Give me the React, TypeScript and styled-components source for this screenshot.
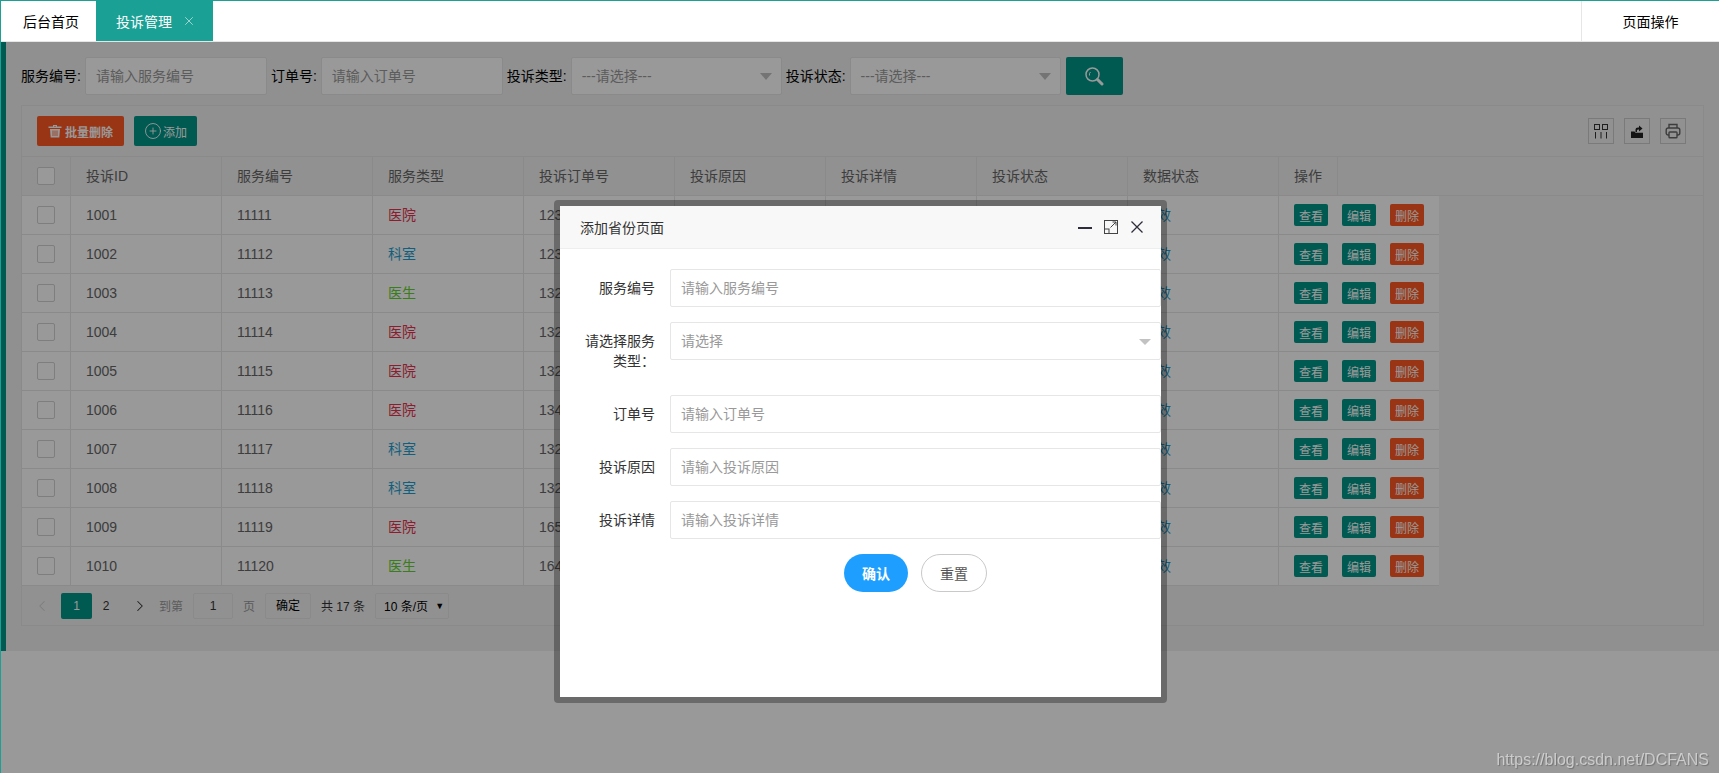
import React from 'react';
import styled, { createGlobalStyle } from 'styled-components';
import { CirclePlus, ChevronLeft, ChevronRight, X } from 'lucide-react';

const GlobalStyle = createGlobalStyle`
  html, body {
    margin: 0;
    padding: 0;
    background: #fff;
  }
  body {
    font-family: "Liberation Sans", "Noto Sans CJK SC", sans-serif;
    font-size: 14px;
    color: #666;
  }
  input::placeholder {
    color: #999;
  }
`;

const rows = [
  ['1001', '11111', 'hospital', '123'],
  ['1002', '11112', 'dept', '123'],
  ['1003', '11113', 'doctor', '132'],
  ['1004', '11114', 'hospital', '132'],
  ['1005', '11115', 'hospital', '132'],
  ['1006', '11116', 'hospital', '134'],
  ['1007', '11117', 'dept', '132'],
  ['1008', '11118', 'dept', '132'],
  ['1009', '11119', 'hospital', '165'],
  ['1010', '11120', 'doctor', '164'],
];

const kinds: Record<string, { label: string; color: string }> = {
  hospital: { label: '医院', color: '#e8324e' },
  dept: { label: '科室', color: '#1e9fd0' },
  doctor: { label: '医生', color: '#5fd030' },
};

const headers = ['投诉ID', '服务编号', '服务类型', '投诉订单号', '投诉原因', '投诉详情', '投诉状态', '数据状态'];

export default function App() {
  return (
    <Page>
      <GlobalStyle />
      <TabBar>
        <Tab>后台首页</Tab>
        <Tab $active>
          投诉管理
          <X size={14} strokeWidth={1.4} color="#b8dfdb" />
        </Tab>
        <PageOps>页面操作</PageOps>
      </TabBar>

      <Frame>
        <Content>
          <SearchRow>
            <SearchLabel>服务编号:</SearchLabel>
            <SearchInput placeholder="请输入服务编号" />
            <SearchLabel>订单号:</SearchLabel>
            <SearchInput placeholder="请输入订单号" />
            <SearchLabel>投诉类型:</SearchLabel>
            <SearchSelect>---请选择---<Caret /></SearchSelect>
            <SearchLabel>投诉状态:</SearchLabel>
            <SearchSelect>---请选择---<Caret /></SearchSelect>
            <SearchButton>
              <svg width="20" height="20" viewBox="0 0 20 20" fill="none" stroke="#fff">
                <circle cx="8.5" cy="8.5" r="6.5" strokeWidth="1.5" />
                <path d="M5.5 9.5a3.5 3.5 0 0 1 1-3.5" strokeWidth="1" />
                <path d="M13.5 13.5l4.5 4.5" strokeWidth="3" strokeLinecap="round" />
              </svg>
            </SearchButton>
          </SearchRow>

          <Panel>
            <Toolbar>
              <ToolbarBtn $danger $w={87}>
                <svg width="14" height="14" viewBox="0 0 14 14" fill="#fff" stroke="none">
                  <path d="M5 2.5V1h4v1.5h4.5v1.4H.5V2.5zM6 2.5h2V2H6z" fillRule="evenodd" />
                  <path d="M2 5h10l-.7 8.5H2.7z" />
                  <path d="M5 6.5v5.5M7 6.5v5.5M9 6.5v5.5" stroke="#ff5722" strokeWidth=".8" />
                </svg>
                批量删除
              </ToolbarBtn>
              <ToolbarBtn $w={63}>
                <CirclePlus size={18} strokeWidth={1.2} />
                添加
              </ToolbarBtn>
              <ToolIcons>
                <ToolIcon>
                  <svg width="16" height="16" viewBox="0 0 16 16" fill="none" stroke="#333" strokeWidth="1">
                    <rect x="1.5" y="1.5" width="5" height="5" />
                    <rect x="9.5" y="1.5" width="5" height="5" />
                    <path d="M2.5 9v6.5M8 9v6.5M13.5 9v6.5" />
                  </svg>
                </ToolIcon>
                <ToolIcon>
                  <svg width="16" height="16" viewBox="0 0 16 16" fill="#222">
                    <path d="M2 8.5h3.5l1 1.2h7.5V15H2z" />
                    <path d="M6.5 9V6.5q0-2 2.5-2H10V2.5l3.5 3-3.5 3v-2H9.5q-1.5 0-1.5 1V9z" />
                  </svg>
                </ToolIcon>
                <ToolIcon>
                  <svg width="16" height="16" viewBox="0 0 16 16" fill="none" stroke="#666" strokeWidth="1.4">
                    <path d="M4 5V1.5h8V5" />
                    <rect x="1.2" y="5" width="13.6" height="7" rx="2" />
                    <rect x="4" y="9" width="8" height="5.7" rx=".8" fill="#f2f2f2" />
                  </svg>
                </ToolIcon>
              </ToolIcons>
            </Toolbar>

            <HeaderRow>
              <CheckCell><Check /></CheckCell>
              {headers.map((h) => (
                <Cell key={h}>{h}</Cell>
              ))}
              <Cell $w={59}>操作</Cell>
            </HeaderRow>

            {rows.map((r) => (
              <Row key={r[0]}>
                <CheckCell><Check /></CheckCell>
                <Cell>{r[0]}</Cell>
                <Cell>{r[1]}</Cell>
                <Cell style={{ color: kinds[r[2]].color }}>{kinds[r[2]].label}</Cell>
                <Cell>{r[3]}</Cell>
                <Cell />
                <Cell />
                <Cell />
                <Cell $status>有效</Cell>
                <ActionCell>
                  <SmallBtn>查看</SmallBtn>
                  <SmallBtn>编辑</SmallBtn>
                  <SmallBtn $danger>删除</SmallBtn>
                </ActionCell>
              </Row>
            ))}

            <Pager>
              <PageArrow $off><ChevronLeft size={22} strokeWidth={1.4} /></PageArrow>
              <PageNum $on>1</PageNum>
              <PageNum>2</PageNum>
              <PageArrow $next><ChevronRight size={22} strokeWidth={1.4} /></PageArrow>
              <PagerText $dim>到第</PagerText>
              <PagerInput>1</PagerInput>
              <PagerText $dim>页</PagerText>
              <PagerBtn>确定</PagerBtn>
              <PagerText>共 17 条</PagerText>
              <PagerSelect>10 条/页<small>▼</small></PagerSelect>
            </Pager>
          </Panel>
        </Content>
        <Dim />
      </Frame>

      <Modal>
        <ModalBox>
          <ModalTitle>
            添加省份页面
            <ModalIcons>
              <svg width="14" height="14" viewBox="0 0 14 14"><path d="M0 8h14" stroke="#2e2d3c" strokeWidth="2" /></svg>
              <svg width="14" height="14" viewBox="0 0 14 14" fill="none" stroke="#444" strokeWidth="1">
                <rect x=".5" y=".5" width="13" height="13" />
                <rect x=".5" y="9" width="4.5" height="4.5" />
                <path d="M6.5 7.5L12 2M8.5 2H12v3.5" />
              </svg>
              <svg width="14" height="14" viewBox="0 0 14 14" fill="none" stroke="#2e2d3c" strokeWidth="1.3"><path d="M1.5 1.5l11 11M12.5 1.5l-11 11" /></svg>
            </ModalIcons>
          </ModalTitle>
          <ModalForm>
            <FormItem>
              <FormLabel>服务编号</FormLabel>
              <FormInput placeholder="请输入服务编号" />
            </FormItem>
            <FormItem>
              <FormLabel>请选择服务类型：</FormLabel>
              <FormSelect>请选择<FormCaret /></FormSelect>
            </FormItem>
            <FormItem>
              <FormLabel>订单号</FormLabel>
              <FormInput placeholder="请输入订单号" />
            </FormItem>
            <FormItem>
              <FormLabel>投诉原因</FormLabel>
              <FormInput placeholder="请输入投诉原因" />
            </FormItem>
            <FormItem>
              <FormLabel>投诉详情</FormLabel>
              <FormInput placeholder="请输入投诉详情" />
            </FormItem>
            <FormActions>
              <PillBtn $primary>确认</PillBtn>
              <PillBtn>重置</PillBtn>
            </FormActions>
          </ModalForm>
        </ModalBox>
      </Modal>

      <Watermark>https://blog.csdn.net/DCFANS</Watermark>
    </Page>
  );
}

const Page = styled.div`
  position: relative;
  width: 1719px;
  height: 773px;
  overflow: hidden;
  background: #fff;
  border-left: 1px solid #1aa094;
  border-top: 1px solid #1aa094;
  box-sizing: border-box;
`;

const TabBar = styled.div`
  display: flex;
  height: 40px;
  background: #fff;
  border-bottom: 1px solid #e6e6e6;
`;

const Tab = styled.div<{ $active?: boolean }>`
  display: flex;
  align-items: center;
  gap: 10px;
  box-sizing: border-box;
  width: ${(p) => (p.$active ? '117px' : '95px')};
  height: 40px;
  padding-left: ${(p) => (p.$active ? '20px' : '22px')};
  font-size: 14px;
  color: ${(p) => (p.$active ? '#fff' : '#000')};
  background: ${(p) => (p.$active ? '#1aa094' : '#fff')};
`;

const PageOps = styled.div`
  display: flex;
  align-items: center;
  justify-content: center;
  margin-left: auto;
  width: 137px;
  font-size: 14px;
  color: #000;
  border-left: 1px solid #e6e6e6;
`;

const Frame = styled.div`
  position: relative;
  height: 731px;
`;

const Content = styled.div`
  box-sizing: border-box;
  height: 609px;
  padding: 15px 0 0 15px;
  background: #f0f0f0;
  border-left: 5px solid #009688;
`;

const Dim = styled.div`
  position: absolute;
  inset: 0;
  background: rgba(0, 0, 0, 0.4);
`;

const SearchRow = styled.div`
  display: flex;
  align-items: flex-start;
  height: 48px;
`;

const SearchLabel = styled.label`
  margin-top: 9px;
  padding-right: 4px;
  font-size: 14px;
  line-height: 20px;
  color: #000;
  white-space: nowrap;
`;

const SearchInput = styled.input`
  box-sizing: border-box;
  width: 182px;
  height: 38px;
  margin-right: 4px;
  padding: 0 10px;
  font: inherit;
  font-size: 14px;
  background: #fff;
  border: 1px solid #e6e6e6;
  border-radius: 2px;
`;

const SearchSelect = styled.div`
  position: relative;
  box-sizing: border-box;
  width: 211px;
  height: 38px;
  margin-right: 4px;
  padding: 0 10px;
  font-size: 14px;
  line-height: 36px;
  color: #999;
  background: #fff;
  border: 1px solid #e6e6e6;
  border-radius: 2px;
`;

const Caret = styled.i`
  position: absolute;
  right: 9px;
  top: 15px;
  border: 6px solid transparent;
  border-top: 7px solid #c2c2c2;
  border-bottom: 0;
`;

const SearchButton = styled.button`
  display: flex;
  align-items: center;
  justify-content: center;
  width: 57px;
  height: 38px;
  margin-left: 1px;
  padding: 0;
  background: #009688;
  border: 0;
  border-radius: 2px;
`;

const Panel = styled.div`
  box-sizing: border-box;
  width: 1683px;
  height: 521px;
  background: #f2f2f2;
  border: 1px solid #e6e6e6;
`;

const Toolbar = styled.div`
  display: flex;
  align-items: center;
  box-sizing: border-box;
  height: 51px;
  padding: 0 17px 0 15px;
  border-bottom: 1px solid #e6e6e6;
`;

const ToolbarBtn = styled.button<{ $danger?: boolean; $w: number }>`
  display: flex;
  align-items: center;
  justify-content: center;
  gap: ${(p) => (p.$danger ? 3 : 1)}px;
  width: ${(p) => p.$w}px;
  height: 30px;
  margin-right: 10px;
  padding: 0;
  font: inherit;
  font-size: 12px;
  font-weight: ${(p) => (p.$danger ? 700 : 400)};
  color: #fff;
  background: ${(p) => (p.$danger ? '#ff5722' : '#009688')};
  border: 0;
  border-radius: 2px;
`;

const ToolIcons = styled.div`
  display: flex;
  gap: 10px;
  margin-left: auto;
`;

const ToolIcon = styled.div`
  display: flex;
  align-items: center;
  justify-content: center;
  box-sizing: border-box;
  width: 26px;
  height: 26px;
  border: 1px solid #ccc;
`;

const HeaderRow = styled.div`
  display: flex;
  height: 39px;
  box-sizing: border-box;
  border-bottom: 1px solid #e6e6e6;
`;

const Row = styled(HeaderRow)`
  width: 1417px;
  background: #fff;
`;

const Cell = styled.div<{ $status?: boolean; $w?: number }>`
  box-sizing: border-box;
  width: ${(p) => p.$w ?? 151}px;
  padding: 0 15px;
  line-height: 38px;
  font-size: 14px;
  color: ${(p) => (p.$status ? '#1e9fd0' : '#666')};
  white-space: nowrap;
  border-right: 1px solid #e6e6e6;
`;

const CheckCell = styled.div`
  display: flex;
  align-items: center;
  justify-content: center;
  box-sizing: border-box;
  width: 49px;
  border-right: 1px solid #e6e6e6;
`;

const Check = styled.span`
  box-sizing: border-box;
  width: 18px;
  height: 18px;
  background: #fff;
  border: 1px solid #d2d2d2;
  border-radius: 2px;
`;

const ActionCell = styled.div`
  display: flex;
  align-items: center;
  gap: 14px;
  padding-left: 15px;
`;

const SmallBtn = styled.button<{ $danger?: boolean }>`
  width: 34px;
  height: 22px;
  padding: 0;
  font: inherit;
  font-size: 12px;
  color: #fff;
  background: ${(p) => (p.$danger ? '#ff5722' : '#009688')};
  border: 0;
  border-radius: 2px;
`;

const Pager = styled.div`
  display: flex;
  align-items: center;
  height: 39px;
  padding-left: 11px;
  font-size: 12px;
  color: #333;
`;

const PageArrow = styled.span<{ $off?: boolean; $next?: boolean }>`
  display: flex;
  justify-content: center;
  width: 18px;
  margin: ${(p) => (p.$next ? '0 0 0 11px' : '0 10px 0 0')};
  color: ${(p) => (p.$off ? '#d2d2d2' : '#333')};
`;

const PageNum = styled.span<{ $on?: boolean }>`
  width: ${(p) => (p.$on ? 31 : 28)}px;
  height: 26px;
  line-height: 26px;
  text-align: center;
  color: ${(p) => (p.$on ? '#fff' : '#333')};
  background: ${(p) => (p.$on ? '#009688' : 'transparent')};
  border-radius: 2px;
`;

const PagerText = styled.span<{ $dim?: boolean }>`
  margin: 0 10px;
  color: ${(p) => (p.$dim ? '#999' : '#333')};
`;

const PagerInput = styled.span`
  box-sizing: border-box;
  width: 40px;
  height: 26px;
  line-height: 24px;
  text-align: center;
  background: #f2f2f2;
  border: 1px solid #e6e6e6;
  border-radius: 2px;
`;

const PagerBtn = styled.span`
  box-sizing: border-box;
  width: 46px;
  height: 26px;
  line-height: 24px;
  text-align: center;
  color: #000;
  background: #f2f2f2;
  border: 1px solid #e6e6e6;
  border-radius: 2px;
`;

const PagerSelect = styled.span`
  display: flex;
  align-items: center;
  justify-content: space-between;
  box-sizing: border-box;
  width: 74px;
  height: 26px;
  padding: 0 4px 0 8px;
  color: #000;
  background: #f2f2f2;
  border: 1px solid #e6e6e6;
  border-radius: 2px;

  small {
    font-size: 9px;
  }
`;

const Modal = styled.div`
  position: absolute;
  left: 553px;
  top: 199px;
  box-sizing: border-box;
  width: 613px;
  height: 503px;
  padding: 6px;
  background: rgba(0, 0, 0, 0.3);
  border-radius: 4px;
`;

const ModalBox = styled.div`
  height: 100%;
  background: #fff;
`;

const ModalTitle = styled.div`
  display: flex;
  align-items: center;
  justify-content: space-between;
  box-sizing: border-box;
  height: 43px;
  padding: 0 17px 0 20px;
  font-size: 14px;
  color: #333;
  background: #f8f8f8;
  border-bottom: 1px solid #eee;
`;

const ModalIcons = styled.div`
  display: flex;
  gap: 12px;
`;

const ModalForm = styled.div`
  padding-top: 20px;
`;

const FormItem = styled.div`
  display: flex;
  align-items: flex-start;
  margin-bottom: 15px;
`;

const FormLabel = styled.label`
  box-sizing: border-box;
  width: 110px;
  padding: 9px 15px 9px 20px;
  font-size: 14px;
  line-height: 20px;
  color: #333;
  text-align: right;
`;

const FormInput = styled.input`
  box-sizing: border-box;
  flex: 1;
  min-width: 0;
  height: 38px;
  padding: 0 10px;
  font: inherit;
  font-size: 14px;
  background: #fff;
  border: 1px solid #e6e6e6;
  border-radius: 2px;
`;

const FormSelect = styled.div`
  position: relative;
  flex: 1;
  box-sizing: border-box;
  height: 38px;
  padding: 0 10px;
  font-size: 14px;
  line-height: 36px;
  color: #999;
  border: 1px solid #e6e6e6;
  border-radius: 2px;
`;

const FormCaret = styled(Caret)`
  right: 9px;
  top: 16px;
  border-width: 6px;
  border-top-width: 6px;
  border-bottom: 0;
`;

const FormActions = styled.div`
  display: flex;
  gap: 13px;
  padding-left: 284px;
`;

const PillBtn = styled.button<{ $primary?: boolean }>`
  box-sizing: border-box;
  width: ${(p) => (p.$primary ? 64 : 66)}px;
  height: 38px;
  padding: 0;
  font: inherit;
  font-size: 14px;
  font-weight: ${(p) => (p.$primary ? 700 : 400)};
  color: ${(p) => (p.$primary ? '#fff' : '#555')};
  background: ${(p) => (p.$primary ? '#1e9fff' : '#fff')};
  border: ${(p) => (p.$primary ? '0' : '1px solid #c9c9c9')};
  border-radius: 19px;
`;

const Watermark = styled.div`
  position: absolute;
  right: 10px;
  bottom: 4px;
  font-size: 16px;
  color: rgba(255, 255, 255, 0.55);
  text-shadow: 1px 1px 1px rgba(0, 0, 0, 0.25);
  filter: blur(0.3px);
`;
